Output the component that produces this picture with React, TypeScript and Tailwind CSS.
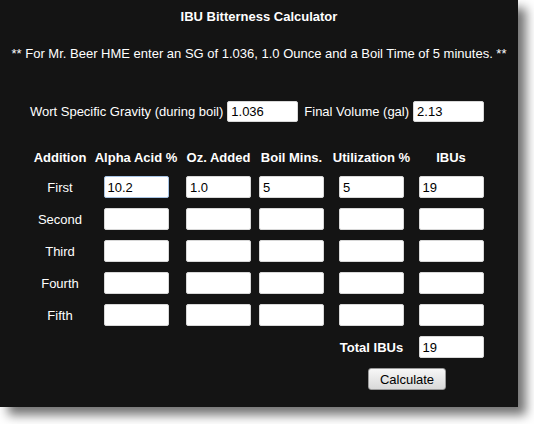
const rows = [
  { label: "First", values: ["10.2", "1.0", "5", "5", "19"] },
  { label: "Second", values: ["", "", "", "", ""] },
  { label: "Third", values: ["", "", "", "", ""] },
  { label: "Fourth", values: ["", "", "", "", ""] },
  { label: "Fifth", values: ["", "", "", "", ""] },
];

const cols = ["w-[64px]", "w-[88px]", "w-[77px]", "w-[69px]", "w-[91px]", "w-[68px]"];
const headers = ["Addition", "Alpha Acid %", "Oz. Added", "Boil Mins.", "Utilization %", "IBUs"];

function Field({ value, focused = false, wide = false }: { value: string; focused?: boolean; wide?: boolean }) {
  return (
    <input
      readOnly
      value={value}
      className={`${wide ? "h-[21px] w-[71px]" : "h-[22px] w-[65px]"} rounded-[2px] border bg-white px-[3px] text-[13px] leading-[15px] text-[#000] outline-none ${
        focused ? "border-[#a8c4e4]" : "border-[#d8d8d8]"
      }`}
    />
  );
}

export default function App() {
  return (
    <div className="h-[424px] w-[534px] bg-white" style={{ fontFamily: '"Liberation Sans", Arial, sans-serif' }}>
      <div className="flex h-[407px] w-[518px] flex-col bg-[#141414] text-[13px] leading-[15px] text-white shadow-[8px_8px_10px_rgba(0,0,0,0.55)]">
        <h1 className="mt-[9px] text-center font-bold">IBU Bitterness Calculator</h1>
        <p className="mt-[22px] text-center">
          ** For Mr. Beer HME enter an SG of 1.036, 1.0 Ounce and a Boil Time of 5 minutes. **
        </p>

        <div className="mt-[40px] flex items-center justify-center gap-[4px] pr-[4px]">
          <span>Wort Specific Gravity (during boil)</span>
          <Field value="1.036" wide />
          <span className="ml-[2px]">Final Volume (gal)</span>
          <Field value="2.13" wide />
        </div>

        <div className="mt-[24px] flex flex-col gap-[10px] pl-[28px]">
          <div className="-mb-[2px] flex h-[22px] items-center font-bold">
            {headers.map((h, i) => (
              <div key={h} className={`${cols[i]} text-center whitespace-nowrap`}>
                {h}
              </div>
            ))}
          </div>

          {rows.map((row, r) => (
            <div key={row.label} className="flex h-[22px] items-center">
              <div className={`${cols[0]} text-center`}>{row.label}</div>
              {row.values.map((v, i) => (
                <div key={i} className={`${cols[i + 1]} flex justify-center`}>
                  <Field value={v} focused={r === 0 && i === 0} />
                </div>
              ))}
            </div>
          ))}

          <div className="flex h-[22px] items-center">
            <div className="w-[298px]" />
            <div className={`${cols[4]} text-center font-bold`}>Total IBUs</div>
            <div className={`${cols[5]} flex justify-center`}>
              <Field value="19" />
            </div>
          </div>

          <div className="flex">
            <div className="w-[340px]" />
            <button className="h-[22px] w-[78px] rounded-[3px] border border-[#9a9a9a] bg-gradient-to-b from-[#f7f7f7] to-[#d9d9d9] text-[13px] text-black">
              Calculate
            </button>
          </div>
        </div>
      </div>
    </div>
  );
}
